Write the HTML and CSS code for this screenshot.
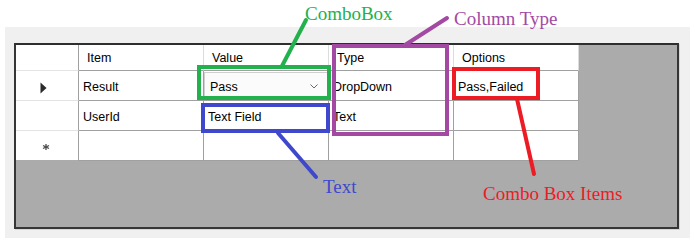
FILE: index.html
```html
<!DOCTYPE html>
<html>
<head>
<meta charset="utf-8">
<link rel="stylesheet" href="styles.css">
</head>
<body>
<div class="form">
  <div class="grid">
    <div class="row head">
      <div class="cell rh"></div>
      <div class="cell hc">Item</div>
      <div class="cell hc">Value</div>
      <div class="cell hc">Type</div>
      <div class="cell hc">Options</div>
    </div>
    <div class="row data">
      <div class="cell rh">
        <svg class="glyph" width="10" height="12" viewBox="0 0 10 12"><polygon points="2.5,0.5 8.5,6 2.5,11.5" fill="#2b2b2b"/></svg>
      </div>
      <div class="cell">Result</div>
      <div class="cell combo-cell">
        <div class="combo">
          <span>Pass</span>
          <svg width="8" height="5" viewBox="0 0 8 5"><polyline points="0.5,0.5 4,4 7.5,0.5" fill="none" stroke="#6a6a6a" stroke-width="1"/></svg>
        </div>
      </div>
      <div class="cell">DropDown</div>
      <div class="cell">Pass,Failed</div>
    </div>
    <div class="row data">
      <div class="cell rh"></div>
      <div class="cell">UserId</div>
      <div class="cell">Text Field</div>
      <div class="cell">Text</div>
      <div class="cell"></div>
    </div>
    <div class="row data last">
      <div class="cell rh">
        <svg class="glyph star" width="8" height="8" viewBox="0 0 8 8"><g stroke="#4a4a4a" stroke-width="1.3"><line x1="4" y1="1" x2="4" y2="7"/><line x1="1" y1="2.5" x2="7" y2="5.5"/><line x1="1" y1="5.5" x2="7" y2="2.5"/></g></svg>
      </div>
      <div class="cell"></div>
      <div class="cell"></div>
      <div class="cell"></div>
      <div class="cell"></div>
    </div>
  </div>
</div>
<svg class="overlay" width="695" height="240" viewBox="0 0 695 240">
  <g fill="none" stroke-width="4" stroke-linecap="round">
    <rect x="199" y="67" width="130" height="31" stroke="#22b14c" stroke-linecap="butt"/>
    <line x1="282" y1="66" x2="306" y2="20" stroke="#22b14c"/>
    <rect x="334" y="46" width="113" height="88" stroke="#a349a4" stroke-linecap="butt"/>
    <line x1="405" y1="45" x2="447" y2="18" stroke="#a349a4"/>
    <rect x="203" y="105" width="125" height="26" stroke="#3f48cc" stroke-linecap="butt"/>
    <line x1="278" y1="133" x2="316" y2="177" stroke="#3f48cc"/>
    <rect x="454" y="69" width="84" height="29" stroke="#ed1c24" stroke-linecap="butt"/>
    <line x1="517" y1="99" x2="534" y2="174" stroke="#ed1c24"/>
  </g>
  <text class="note" x="305" y="20" fill="#22b14c">ComboBox</text>
  <text class="note" x="454" y="25" fill="#a349a4">Column Type</text>
  <text class="note" x="323" y="193" fill="#3f48cc">Text</text>
  <text class="note" x="483" y="200" fill="#ed1c24">Combo Box Items</text>
</svg>
</body>
</html>
```

FILE: styles.css
```css
html, body {
  margin: 0;
  padding: 0;
  background: #ffffff;
}

body {
  position: relative;
  width: 695px;
  height: 240px;
  overflow: hidden;
  font-family: "Liberation Sans", Arial, sans-serif;
  font-size: 12.5px;
  color: #000;
}

.form {
  margin: 27px 0 0 5px;
  width: 685px;
  height: 211px;
  padding: 16px 0 0 9px;
  box-sizing: border-box;
  background: #f0f0f0;
}

.grid {
  width: 665px;
  height: 186px;
  box-sizing: border-box;
  border: 2px solid #363636;
  border-top-color: #2e2e2e;
  background: #ababab;
  box-shadow: 1px 1px 0 #d8d8d8;
}

.row {
  display: grid;
  grid-template-columns: 63px repeat(4, 125px);
}

.row.head {
  height: 26px;
}

.row.data {
  height: 30px;
}

.cell {
  box-sizing: border-box;
  background: #ffffff;
  border-right: 1px solid #a0a0a0;
  border-bottom: 1px solid #a0a0a0;
  display: flex;
  align-items: center;
  padding: 2px 0 0 4px;
  white-space: nowrap;
  overflow: hidden;
}

.head .cell {
  padding: 1px 0 0 8px;
  border-right-color: #dcdcdc;
  border-bottom-color: #a0a0a0;
}

.head .cell.rh {
  border-right-color: #a0a0a0;
}

.cell.rh {
  padding: 0;
  border-bottom-color: #e3e3e3;
  position: relative;
}

.last .cell.rh {
  border-bottom-color: #ababab;
}

.glyph {
  position: absolute;
  left: 22px;
  top: 11px;
}

.glyph.star {
  left: 26px;
  top: 12px;
}

.combo-cell {
  padding: 0;
}

.combo {
  box-sizing: border-box;
  width: 124px;
  height: 27px;
  margin: 0 0 0 0;
  border: 1px solid #cfcfcf;
  background: #fbfbfb;
  display: flex;
  align-items: center;
  justify-content: space-between;
  padding: 2px 9px 0 5px;
}

.combo svg {
  margin-top: -1px;
}

.overlay {
  position: absolute;
  left: 0;
  top: 0;
  pointer-events: none;
}

.note {
  font-family: "Liberation Serif", "Times New Roman", serif;
  font-size: 19px;
}
```
